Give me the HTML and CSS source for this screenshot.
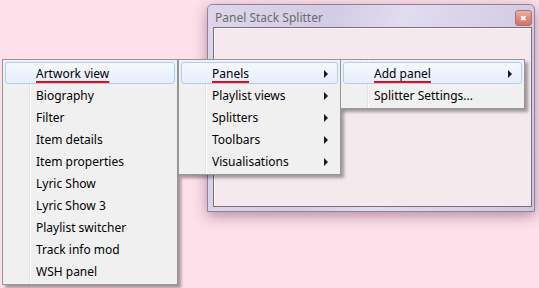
FILE: index.html
```html
<!DOCTYPE html>
<html lang="en">
<head>
    <meta charset="UTF-8">
    <title>Panel Stack Splitter</title>
    <link rel="stylesheet" href="styles.css">
</head>
<body>
    <!-- window -->
    <div class="window">
        <div class="titlebar">
            <span class="title">Panel Stack Splitter</span>
            <div class="close-btn">&#x2716;</div>
        </div>
        <div class="client"></div>
    </div>

    <!-- panel list -->
    <div class="menu menu-panels">
        <div class="item active"><span class="mark">Artwork view</span></div>
        <div class="item">Biography</div>
        <div class="item">Filter</div>
        <div class="item">Item details</div>
        <div class="item">Item properties</div>
        <div class="item">Lyric Show</div>
        <div class="item">Lyric Show 3</div>
        <div class="item">Playlist switcher</div>
        <div class="item">Track info mod</div>
        <div class="item">WSH panel</div>
    </div>

    <!-- categories -->
    <div class="menu menu-types">
        <div class="item sub active"><span class="mark">Panels</span></div>
        <div class="item sub">Playlist views</div>
        <div class="item sub">Splitters</div>
        <div class="item sub">Toolbars</div>
        <div class="item sub">Visualisations</div>
    </div>

    <!-- splitter menu -->
    <div class="menu menu-root">
        <div class="item sub active"><span class="mark">Add panel</span></div>
        <div class="item">Splitter Settings...</div>
    </div>
</body>
</html>
```

FILE: styles.css
```css
body {
    margin: 0;
    width: 539px;
    height: 288px;
    overflow: hidden;
    background-color: #fde0ea;
    font-family: "Noto Sans", "Open Sans", sans-serif;
    font-size: 12px;
    position: relative;
}
.window {
    position: absolute;
    left: 207px;
    top: 4px;
    width: 328px;
    height: 208px;
    box-sizing: border-box;
    border: 1px solid #8e8499;
    border-radius: 5px 5px 0 0;
    padding: 0 2px 4px 5px;
    display: flex;
    flex-direction: column;
    background: linear-gradient(100deg, #ddd6ea 0%, #d4cbe4 35%, #e2dcef 55%, #cfc6df 100%);
    box-shadow: 0 4px 14px rgba(90, 40, 70, 0.45);
}
.titlebar {
    height: 22px;
    display: flex;
    align-items: center;
    justify-content: space-between;
}
.title {
    color: #6a6a72;
    margin-left: 2px;
    padding-top: 2px;
}
.close-btn {
    width: 17px;
    height: 16px;
    margin-top: 4px;
    box-sizing: border-box;
    border: 1px solid #b0707a;
    border-radius: 3px;
    background: linear-gradient(#eeb2a6, #e08a78 50%, #d87362);
    color: #fff;
    font-size: 8px;
    line-height: 14px;
    text-align: center;
}
.client {
    flex: 1;
    border: 1px solid #7b6f7a;
    background-color: #f5e9ee;
    box-shadow: inset 1px 1px 0 #fbf5f8;
}
.menu {
    position: absolute;
    top: 59px;
    box-sizing: border-box;
    border: 1px solid #979797;
    padding: 2px;
    background: linear-gradient(to right, transparent 26px, #e2e3e3 26px, #e2e3e3 27px, #ffffff 27px, #ffffff 28px, transparent 28px), #f0f0f0;
    box-shadow: 3px 3px 3px rgba(0, 0, 0, 0.35);
}
.menu-panels {
    left: 2px;
    width: 176px;
}
.menu-types {
    left: 178px;
    width: 163px;
}
.menu-root {
    left: 340px;
    width: 185px;
}
.item {
    height: 22px;
    line-height: 21px;
    padding-left: 30px;
    box-sizing: border-box;
    border: 1px solid transparent;
    border-radius: 3px;
    color: #000;
    position: relative;
}
.item.active {
    border-color: #aecff4;
    background: linear-gradient(#f5f9fe, #e6eefb);
}
.sub::after {
    content: "";
    position: absolute;
    right: 9px;
    top: 7px;
    border-left: 4px solid #1a1a1a;
    border-top: 4px solid transparent;
    border-bottom: 4px solid transparent;
}
.mark {
    text-decoration: underline;
    text-decoration-color: #e3101b;
    text-decoration-thickness: 2px;
    text-underline-offset: 3px;
}
```
